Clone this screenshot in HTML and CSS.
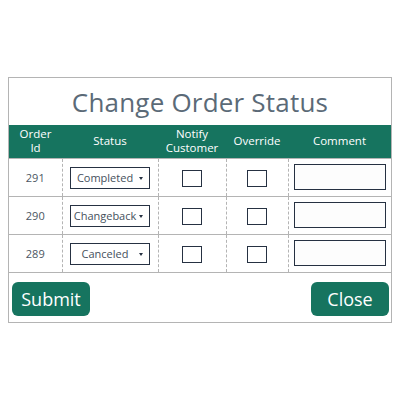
FILE: index.html
```html
<!DOCTYPE html>
<html>
<head>
<meta charset="utf-8">
<link rel="stylesheet" href="styles.css">
</head>
<body>
<div class="page">
  <div class="dialog">
    <h1 class="title">Change Order Status</h1>
    <table class="grid">
      <colgroup>
        <col class="c-id"><col class="c-status"><col class="c-notify"><col class="c-override"><col class="c-comment">
      </colgroup>
      <thead>
        <tr>
          <th>Order<br>Id</th>
          <th>Status</th>
          <th>Notify<br>Customer</th>
          <th>Override</th>
          <th>Comment</th>
        </tr>
      </thead>
      <tbody>
        <tr>
          <td class="num">291</td>
          <td><span class="sel"><select><option>Completed</option></select></span></td>
          <td><input type="checkbox" class="box"></td>
          <td><input type="checkbox" class="box"></td>
          <td><input type="text" class="comment"></td>
        </tr>
        <tr>
          <td class="num">290</td>
          <td><span class="sel"><select><option>Changeback</option></select></span></td>
          <td><input type="checkbox" class="box"></td>
          <td><input type="checkbox" class="box"></td>
          <td><input type="text" class="comment"></td>
        </tr>
        <tr>
          <td class="num">289</td>
          <td><span class="sel"><select><option>Canceled</option></select></span></td>
          <td><input type="checkbox" class="box"></td>
          <td><input type="checkbox" class="box"></td>
          <td><input type="text" class="comment"></td>
        </tr>
      </tbody>
    </table>
    <div class="footer">
      <button class="btn">Submit</button>
      <button class="btn">Close</button>
    </div>
  </div>
</div>
</body>
</html>
```

FILE: styles.css
```css
html, body {
  margin: 0;
  padding: 0;
  background: #ffffff;
}
body {
  font-family: "Open Sans", "Liberation Sans", sans-serif;
}
.page {
  height: 400px;
  padding: 0 8px;
  box-sizing: border-box;
  display: flex;
  flex-direction: column;
  justify-content: center;
}
.dialog {
  border: 1px solid #b4b4b4;
  height: 246px;
  box-sizing: border-box;
  display: flex;
  flex-direction: column;
}
.title {
  margin: 0;
  height: 47px;
  flex: none;
  display: flex;
  align-items: center;
  justify-content: center;
  font-size: 26px;
  font-weight: 400;
  color: #5b6a77;
  letter-spacing: 0.2px;
}
.grid {
  border-collapse: collapse;
  table-layout: fixed;
  width: 100%;
  flex: none;
}
.c-id { width: 53px; }
.c-status { width: 96px; }
.c-notify { width: 68px; }
.c-override { width: 62px; }
.c-comment { width: auto; }
.grid th {
  background: #16745f;
  color: #ffffff;
  font-size: 11.5px;
  font-weight: 500;
  line-height: 14px;
  height: 33px;
  box-sizing: border-box;
  padding: 0;
  text-align: center;
  vertical-align: middle;
}
.grid td {
  height: 38px;
  box-sizing: border-box;
  padding: 0;
  text-align: center;
  vertical-align: middle;
  border-top: 1px solid #b4b4b4;
  border-bottom: 1px solid #b4b4b4;
  border-left: 1px dashed #b4b4b4;
}
.grid td:first-child {
  border-left: none;
}
.num {
  font-size: 11px;
  color: #4b5662;
}
.sel {
  position: relative;
  display: inline-block;
  vertical-align: middle;
  width: 80px;
  height: 22px;
}
.sel select {
  -webkit-appearance: none;
  appearance: none;
  display: block;
  width: 80px;
  height: 22px;
  box-sizing: border-box;
  border: 1px solid #263142;
  border-radius: 0;
  background: #ffffff;
  font-family: "Open Sans", "Liberation Sans", sans-serif;
  font-size: 11px;
  color: #45505c;
  padding: 0 12px 0 2px;
  text-align-last: center;
  margin: 0;
}
.sel::after {
  content: "";
  position: absolute;
  right: 7px;
  top: 10px;
  border-left: 2px solid transparent;
  border-right: 2px solid transparent;
  border-top: 3px solid #263142;
  pointer-events: none;
}
.box {
  -webkit-appearance: none;
  appearance: none;
  width: 20px;
  height: 17px;
  margin: 0;
  border: 1px solid #263142;
  background: #ffffff;
  vertical-align: middle;
}
.comment {
  width: 92px;
  height: 26px;
  box-sizing: border-box;
  border: 1px solid #263142;
  background: #fdfdfd;
  margin: 0;
  padding: 0;
  vertical-align: middle;
}
.footer {
  flex: 1;
  display: flex;
  justify-content: space-between;
  align-items: flex-start;
  padding: 9px 2px 0 3px;
}
.btn {
  width: 78px;
  height: 34px;
  border: none;
  border-radius: 6px;
  background: #16745f;
  color: #ffffff;
  font-family: "Open Sans", "Liberation Sans", sans-serif;
  font-size: 18px;
  font-weight: 500;
  padding: 0;
}
```
